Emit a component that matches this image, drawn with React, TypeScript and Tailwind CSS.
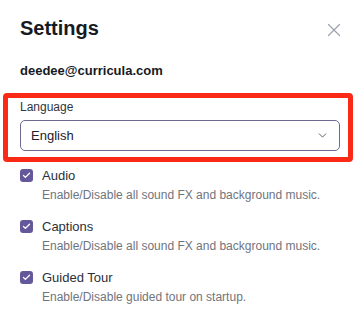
import { X, ChevronDown, Check } from 'lucide-react';

const options = [
  { label: 'Audio', desc: 'Enable/Disable all sound FX and background music.' },
  { label: 'Captions', desc: 'Enable/Disable all sound FX and background music.' },
  { label: 'Guided Tour', desc: 'Enable/Disable guided tour on startup.' },
];

export default function App() {
  return (
    <div className="w-[357px] h-[334px] bg-white pl-5 pr-[17px] pt-4 font-['Liberation_Sans',Arial,sans-serif] overflow-hidden">
      <div className="flex items-center justify-between h-6">
        <h2 className="text-[20px] leading-6 font-bold text-[#161a23]">Settings</h2>
        <X size={22} strokeWidth={1.3} className="text-[#9ca3af] -mr-[5px] mt-[3px]" />
      </div>

      <p className="mt-[23px] text-[13px] leading-4 font-bold text-[#161a23]">deedee@curricula.com</p>

      <div className="mt-[14px] -ml-[17px] -mr-[13px] border-[5px] border-[#fa2a17] rounded-[4px] pl-3 pr-2 pt-[1px] pb-[6px]">
        <label className="block text-[12px] leading-4 text-[#2f3440]">Language</label>
        <div className="mt-[5px] h-[31px] rounded-[5px] border-[1.5px] border-[#6d6a90] flex items-center justify-between pl-[10px] pr-[10px]">
          <span className="text-[13px] text-[#1d212b]">English</span>
          <ChevronDown size={13} strokeWidth={1.75} className="text-[#585c66]" />
        </div>
      </div>

      <div className="mt-[6px] flex flex-col gap-4">
        {options.map((o) => (
          <div key={o.label} className="flex gap-[9px]">
            <div className="mt-[1px] w-[13px] h-[13px] rounded-[3px] bg-[#65589a] flex items-center justify-center shrink-0">
              <Check size={9} strokeWidth={3.5} className="text-white" />
            </div>
            <div>
              <p className="text-[13px] leading-4 font-medium text-[#2b303b]">{o.label}</p>
              <p className="mt-[3px] text-[12px] leading-4 text-[#70747d]">{o.desc}</p>
            </div>
          </div>
        ))}
      </div>
    </div>
  );
}
